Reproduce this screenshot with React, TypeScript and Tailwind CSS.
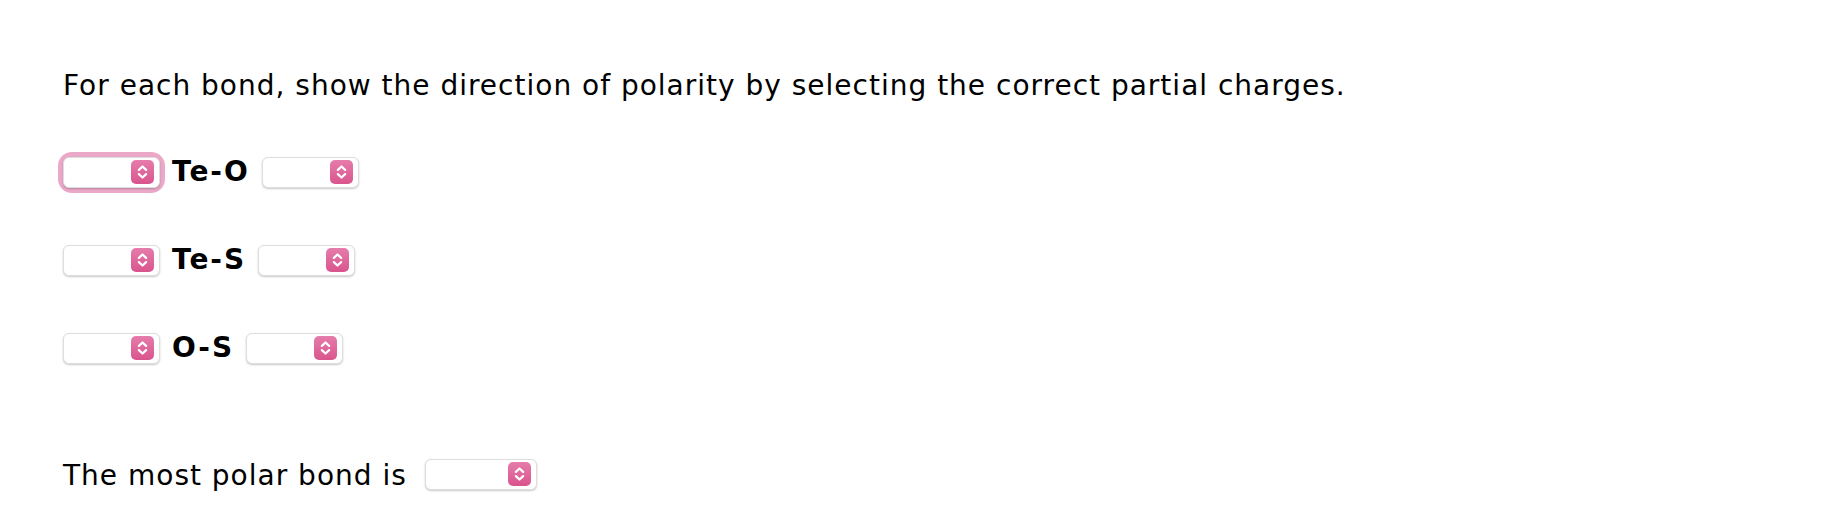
function Picker({ focused = false, width = 'w-[97px]' }: { focused?: boolean; width?: string }) {
  return (
    <span
      className={`inline-flex rounded-[9px] ${focused ? 'ring-[5px] ring-[#eba8c8]' : ''}`}
    >
      <span
        className={`${width} h-[31px] flex items-center justify-end pr-[5px] bg-white rounded-[6px] border border-[#dedede] shadow-[0_1px_2px_rgba(0,0,0,0.22)]`}
      >
        <span className="w-[23px] h-[24px] rounded-[5px] bg-gradient-to-b from-[#e57cab] to-[#d9548d] flex items-center justify-center">
          <svg viewBox="0 0 24 24" className="w-[23px] h-[24px]" fill="none" stroke="white" strokeWidth={2.3} strokeLinecap="round" strokeLinejoin="round">
            <path d="M8.2 9.8 L12 6.2 L15.8 9.8" />
            <path d="M8.2 14.2 L12 17.8 L15.8 14.2" />
          </svg>
        </span>
      </span>
    </span>
  );
}

function BondRow({ label, focused = false }: { label: string; focused?: boolean }) {
  return (
    <div className="flex items-center h-[32px]">
      <Picker focused={focused} />
      <span className="ml-[12px] mr-[12px] font-bold text-[28px] tracking-[2px] leading-none text-black">
        {label}
      </span>
      <Picker />
    </div>
  );
}

export default function App() {
  return (
    <div
      className="w-[1836px] h-[530px] bg-white text-black pl-[63px] pt-[70px]"
      style={{ fontFamily: '"DejaVu Sans", Verdana, sans-serif' }}
    >
      <p className="text-[28px] tracking-[1px] leading-[32px]">
        For each bond, show the direction of polarity by selecting the correct partial charges.
      </p>

      <div className="mt-[54px] flex flex-col gap-[56px]">
        <BondRow label="Te-O" focused />
        <BondRow label="Te-S" />
        <BondRow label="O-S" />
      </div>

      <div className="mt-[96px] flex items-center h-[32px]">
        <span className="text-[28px] tracking-[1px] leading-none">The most polar bond is</span>
        <span className="ml-[18px]">
          <Picker width="w-[112px]" />
        </span>
      </div>
    </div>
  );
}
